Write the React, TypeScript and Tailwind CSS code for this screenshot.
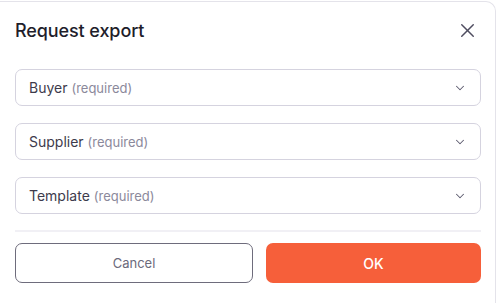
import { X, ChevronDown } from 'lucide-react'

const fields = ['Buyer', 'Supplier', 'Template']

function SelectField({ label }: { label: string }) {
  return (
    <div className="h-[37px] rounded-[7px] border border-[#d5d3df] bg-white flex items-center justify-between pl-[13px] pr-[13px]">
      <span className="text-[14px] text-[#3d3b4c]">
        {label} <span className="text-[13px] text-[#8b899b]">(required)</span>
      </span>
      <ChevronDown size={14} strokeWidth={1.75} className="text-[#5c5a6e]" />
    </div>
  )
}

export default function App() {
  return (
    <div className="w-[498px] h-[303px] bg-white" style={{ fontFamily: 'Inter, "Noto Sans", sans-serif' }}>
      <div className="w-[496px] h-[303px] mt-[1px] bg-white border-t border-r border-[#e4e3ea] rounded-tr-[10px] pl-[15px] pr-[14px]">
        <div className="flex items-center justify-between h-[55px] pt-[1px]">
          <h1 className="text-[18px] font-medium text-[#1f1e2b] tracking-[-0.1px]">Request export</h1>
          <X size={23} strokeWidth={1.5} className="text-[#4f4d60] mr-[2px]" />
        </div>
        <div className="flex flex-col gap-[17px] mt-[12px]">
          {fields.map((f) => (
            <SelectField key={f} label={f} />
          ))}
        </div>
        <div className="mt-[16px] h-[2px] bg-[#f1f0f5]" />
        <div className="flex gap-[13px] mt-[11px]">
          <button className="w-[238px] h-[40px] rounded-[7px] border border-[#6e6c7c] text-[13px] text-[#6b6a7b] pt-[1px]">
            Cancel
          </button>
          <button className="flex-1 h-[40px] rounded-[7px] bg-[#f65f3a] text-[14px] font-medium text-white">
            OK
          </button>
        </div>
      </div>
    </div>
  )
}
